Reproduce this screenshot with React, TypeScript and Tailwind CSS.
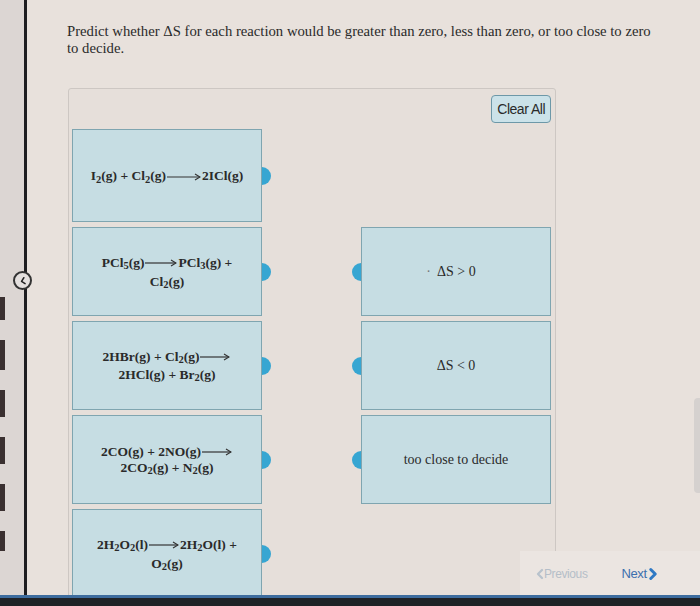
import { ChevronLeft, ChevronRight } from 'lucide-react';

// long reaction arrow drawn inline with the formula text
function Arrow({ w = 36 }: { w?: number }) {
  return (
    <svg width={w} height="8" viewBox={`0 0 ${w} 8`} className="inline-block align-middle mx-[1px]">
      <line x1="0" y1="4" x2={w - 1} y2="4" stroke="#333" strokeWidth="1.2" />
      <polyline points={`${w - 6},1 ${w - 1},4 ${w - 6},7`} fill="none" stroke="#333" strokeWidth="1.2" />
    </svg>
  );
}

function Sub({ children }: { children: React.ReactNode }) {
  return <sub className="text-[10.5px]">{children}</sub>;
}

const cardClass =
  'w-[190px] shrink-0 bg-[#c6dde3] border border-[#7fa5b0] flex flex-col items-center justify-center text-center text-[#2a2a2a]';

function ReactionCard({ children, tall }: { children: React.ReactNode; tall?: boolean }) {
  return (
    <div className="flex items-center">
      <div className={`${cardClass} ${tall ? 'h-[93px]' : 'h-[89px]'} font-bold text-[13.5px] leading-[19px] px-2`}>
        {children}
      </div>
      <div className="w-[9px] h-[18px] bg-[#37a6d2] rounded-r-full" />
    </div>
  );
}

function BinCard({ children }: { children: React.ReactNode }) {
  return (
    <div className="flex items-center">
      <div className="w-[9px] h-[18px] bg-[#37a6d2] rounded-l-full" />
      <div className={`${cardClass} w-[189px] h-[89px] text-[14px]`}>{children}</div>
    </div>
  );
}

export default function App() {
  const serif = "font-['Liberation_Serif',serif]";

  return (
    <div className={`w-[700px] h-[606px] overflow-hidden relative flex flex-col bg-[#e8e1dc] ${serif}`}>
      <div className="flex flex-1 min-h-0">
        {/* left rail */}
        <div className="w-[27px] shrink-0 relative bg-[#dcd6d3] border-r-[3px] border-[#1d1d20]">
          <div className="flex flex-col pt-[297px] gap-[20px]">
            <div className="w-[5px] h-[23px] bg-[#3a3030]" />
            <div className="w-[5px] h-[30px] bg-[#3a3030]" />
            <div className="w-[5px] h-[27px] bg-[#3a3030]" />
            <div className="w-[5px] h-[27px] bg-[#3a3030]" />
            <div className="w-[5px] h-[27px] bg-[#3a3030]" />
            <div className="w-[5px] h-[20px] bg-[#3a3030]" />
          </div>
          <div className="absolute left-[13px] top-[271px] w-[19px] h-[19px] rounded-full bg-[#e4e0de] border-2 border-[#333] flex items-center justify-center">
            <ChevronLeft className="w-[12px] h-[12px] text-[#222] -rotate-12" strokeWidth={3} />
          </div>
        </div>

        {/* question body */}
        <div className="flex-1 relative overflow-hidden pl-[40px] pt-[23px]">
          <p className="text-[14.7px] leading-[17px] text-[#2a2a2a] w-[590px]">
            Predict whether ΔS for each reaction would be greater than zero, less than zero, or too close to zero
            to decide.
          </p>

          <div className="mt-[31px] ml-[1px] w-[488px] h-[540px] border border-[#cdc7c3] rounded-[3px] pl-[3px] pr-[4px] bg-[#e6dfda]">
            <div className="flex justify-end pt-[6px]">
              <button className="h-[28px] px-[5px] rounded-[4px] bg-[#cbe2e9] border border-[#6d98a8] text-[14px] tracking-[-0.5px] text-[#2a2a2a] font-['Liberation_Sans',sans-serif]">
                Clear All
              </button>
            </div>

            <div className="mt-[6px] flex flex-col gap-[5px]">
              <div className="flex justify-between">
                <ReactionCard tall>
                  <div>
                    I<Sub>2</Sub>(g) + Cl<Sub>2</Sub>(g)
                    <Arrow w={34} />
                    2ICl(g)
                  </div>
                </ReactionCard>
              </div>

              <div className="flex justify-between">
                <ReactionCard>
                  <div>
                    PCl<Sub>5</Sub>(g)
                    <Arrow w={32} />
                    PCl<Sub>3</Sub>(g) +
                  </div>
                  <div>
                    Cl<Sub>2</Sub>(g)
                  </div>
                </ReactionCard>
                <BinCard>
                  <span className="-ml-[10px]">
                    <span className="text-[#777] mr-[6px]">·</span>ΔS &gt; 0
                  </span>
                </BinCard>
              </div>

              <div className="flex justify-between">
                <ReactionCard>
                  <div className="leading-[18px]">
                    2HBr(g) + Cl<Sub>2</Sub>(g)
                    <Arrow w={30} />
                  </div>
                  <div className="leading-[18px]">
                    2HCl(g) + Br<Sub>2</Sub>(g)
                  </div>
                </ReactionCard>
                <BinCard>ΔS &lt; 0</BinCard>
              </div>

              <div className="flex justify-between">
                <ReactionCard>
                  <div className="leading-[16px]">
                    2CO(g) + 2NO(g)
                    <Arrow w={30} />
                  </div>
                  <div className="leading-[16px]">
                    2CO<Sub>2</Sub>(g) + N<Sub>2</Sub>(g)
                  </div>
                </ReactionCard>
                <BinCard>too close to decide</BinCard>
              </div>

              <div className="flex justify-between">
                <ReactionCard>
                  <div>
                    2H<Sub>2</Sub>O<Sub>2</Sub>(l)
                    <Arrow w={30} />
                    2H<Sub>2</Sub>O(l) +
                  </div>
                  <div>
                    O<Sub>2</Sub>(g)
                  </div>
                </ReactionCard>
              </div>
            </div>
          </div>

          {/* scroll thumb */}
          <div className="absolute right-0 top-[398px] w-[6px] h-[95px] rounded-l bg-[#d5d1cf]" />

          {/* previous / next navigation */}
          <div className="absolute right-0 bottom-0 w-[180px] h-[44px] bg-[#ebe5e1] flex items-center gap-[34px] pl-[12px] pt-[2px] font-['Liberation_Sans',sans-serif]">
            <span className="flex items-center text-[12px] text-[#b5bec8] tracking-[-0.4px]">
              <ChevronLeft className="w-[16px] h-[22px] -mr-[4px] text-[#b8c2cc]" strokeWidth={3.5} />
              Previous
            </span>
            <span className="flex items-center text-[13px] text-[#3c6fae] tracking-[-0.4px]">
              Next
              <ChevronRight className="w-[18px] h-[24px] -ml-[3px] text-[#2f79c4]" strokeWidth={4} />
            </span>
          </div>
        </div>
      </div>

      {/* monitor edge */}
      <div className="h-[11px] shrink-0 bg-[#1f2226] border-t-[3px] border-[#3d6c9e]" />
    </div>
  );
}
